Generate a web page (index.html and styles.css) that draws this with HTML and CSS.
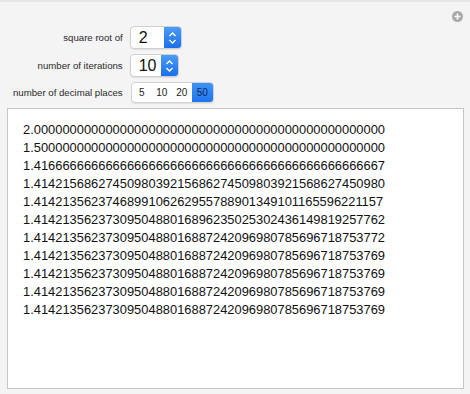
FILE: index.html
```html
<!DOCTYPE html>
<html>
<head>
    <title>Square Root Iterations</title>
    <link rel="stylesheet" href="styles.css">
</head>
<body>
    <div class="panel">
        <div class="plus-icon">
            <svg width="11" height="11" viewBox="0 0 11 11">
                <circle cx="5.5" cy="5.5" r="5.5" fill="#a8a8a8"/>
                <path d="M5.5 2.6v5.8M2.6 5.5h5.8" stroke="#fff" stroke-width="1.6"/>
            </svg>
        </div>

        <div class="controls">
            <div class="label">square root of</div>
            <div class="popup popup-wide">
                <span class="popup-value">2</span>
                <span class="stepper">
                    <svg width="9" height="14" viewBox="0 0 9 14">
                        <path d="M1.5 5L4.5 2L7.5 5M1.5 9L4.5 12L7.5 9" fill="none" stroke="#fff" stroke-width="1.4"/>
                    </svg>
                </span>
            </div>

            <div class="label">number of iterations</div>
            <div class="popup popup-narrow">
                <span class="popup-value">10</span>
                <span class="stepper">
                    <svg width="9" height="14" viewBox="0 0 9 14">
                        <path d="M1.5 5L4.5 2L7.5 5M1.5 9L4.5 12L7.5 9" fill="none" stroke="#fff" stroke-width="1.4"/>
                    </svg>
                </span>
            </div>

            <div class="label">number of decimal places</div>
            <div class="segmented">
                <span class="segment">5</span>
                <span class="segment">10</span>
                <span class="segment">20</span>
                <span class="segment selected">50</span>
            </div>
        </div>

        <div class="output">
            <div>2.0000000000000000000000000000000000000000000000000</div>
            <div>1.5000000000000000000000000000000000000000000000000</div>
            <div>1.4166666666666666666666666666666666666666666666667</div>
            <div>1.4142156862745098039215686274509803921568627450980</div>
            <div>1.4142135623746899106262955788901349101165596221157</div>
            <div>1.4142135623730950488016896235025302436149819257762</div>
            <div>1.4142135623730950488016887242096980785696718753772</div>
            <div>1.4142135623730950488016887242096980785696718753769</div>
            <div>1.4142135623730950488016887242096980785696718753769</div>
            <div>1.4142135623730950488016887242096980785696718753769</div>
            <div>1.4142135623730950488016887242096980785696718753769</div>
        </div>
    </div>
</body>
</html>
```

FILE: styles.css
```css
body {
    margin: 0;
    background: #f6f6f6;
    font-family: "Liberation Sans", Arial, sans-serif;
    width: 470px;
    height: 394px;
    overflow: hidden;
}

.panel {
    position: relative;
    height: 392px;
    border-top: 2px solid #e6e6e6;
    background: #f4f4f4;
}

.plus-icon {
    position: absolute;
    top: 9px;
    right: 7px;
    line-height: 0;
}

.controls {
    display: grid;
    grid-template-columns: auto auto;
    justify-content: start;
    column-gap: 7px;
    row-gap: 5px;
    align-items: center;
    justify-items: start;
    padding: 24px 0 0 13px;
}

.label {
    justify-self: end;
    white-space: nowrap;
    font-size: 9.65px;
    color: #2a2a2a;
}

.popup {
    display: flex;
    height: 21px;
    border: 1px solid #cfcfcf;
    border-radius: 4px;
    background: #fff;
    overflow: hidden;
    box-shadow: 0 1px 1px rgba(0, 0, 0, 0.08);
}

.popup-wide {
    width: 50px;
}

.popup-narrow {
    width: 47px;
}

.popup-value {
    flex: 1;
    padding-left: 8px;
    font-size: 16px;
    line-height: 21px;
    color: #111;
}

.stepper {
    width: 17px;
    display: flex;
    align-items: center;
    justify-content: center;
    background: linear-gradient(#4b9bf9, #1b6fe9);
}

.segmented {
    display: flex;
    height: 19px;
    margin-left: 1px;
    border: 1px solid #d2d2d2;
    border-radius: 4px;
    background: #fff;
    overflow: hidden;
    box-shadow: 0 1px 1px rgba(0, 0, 0, 0.08);
}

.segment {
    width: 20px;
    font-size: 10px;
    line-height: 19px;
    text-align: center;
    color: #222;
}

.segment.selected {
    width: 21px;
    background: linear-gradient(#3f94f9, #1f74ec);
    color: #0c2a5a;
}

.output {
    margin: 5px 6px 0 7px;
    height: 267px;
    padding: 12px 0 0 15px;
    border: 1px solid #c6c6c6;
    background: #fff;
    font-size: 12.9px;
    line-height: 18px;
    color: #111;
    overflow: hidden;
}
```
